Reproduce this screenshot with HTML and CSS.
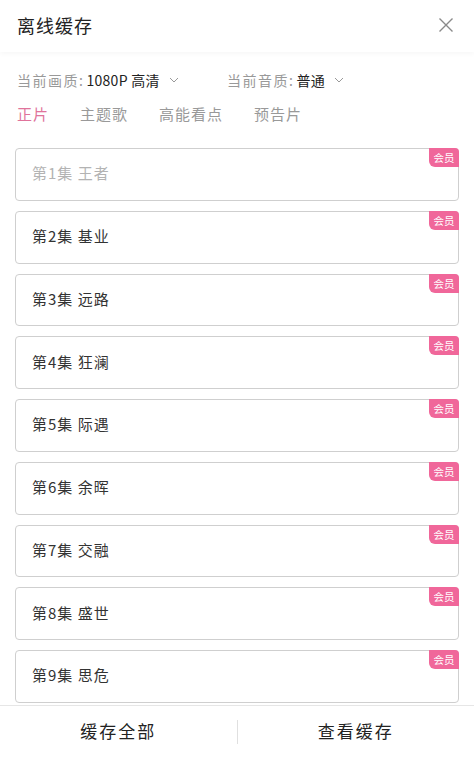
FILE: index.html
```html
<!DOCTYPE html>
<html lang="zh">
<head>
<meta charset="utf-8">
<title>离线缓存</title>
<link rel="stylesheet" href="styles.css">
</head>
<body>
<div class="page">
  <header class="header">
    <h1 class="title">离线缓存</h1>
    <button class="close" aria-label="关闭">
      <svg width="16" height="16" viewBox="0 0 16 16"><path d="M1.5 1.5L14.5 14.5M14.5 1.5L1.5 14.5" stroke="#8a8a8a" stroke-width="1.4" fill="none"/></svg>
    </button>
  </header>

  <div class="quality">
    <div class="q-item q-video">
      <span class="q-label">当前画质:</span><span class="q-value">1080P 高清</span>
      <svg class="chev" width="10" height="6" viewBox="0 0 10 6"><path d="M1 1L5 5L9 1" stroke="#999" stroke-width="1" fill="none"/></svg>
    </div>
    <div class="q-item">
      <span class="q-label">当前音质:</span><span class="q-value">普通</span>
      <svg class="chev" width="10" height="6" viewBox="0 0 10 6"><path d="M1 1L5 5L9 1" stroke="#999" stroke-width="1" fill="none"/></svg>
    </div>
  </div>

  <nav class="tabs">
    <span class="tab active">正片</span>
    <span class="tab">主题歌</span>
    <span class="tab">高能看点</span>
    <span class="tab">预告片</span>
  </nav>

  <div class="list">
    <div class="card disabled"><span class="ep">第1集 王者</span><span class="badge">会员</span></div>
    <div class="card"><span class="ep">第2集 基业</span><span class="badge">会员</span></div>
    <div class="card"><span class="ep">第3集 远路</span><span class="badge">会员</span></div>
    <div class="card"><span class="ep">第4集 狂澜</span><span class="badge">会员</span></div>
    <div class="card"><span class="ep">第5集 际遇</span><span class="badge">会员</span></div>
    <div class="card"><span class="ep">第6集 余晖</span><span class="badge">会员</span></div>
    <div class="card"><span class="ep">第7集 交融</span><span class="badge">会员</span></div>
    <div class="card"><span class="ep">第8集 盛世</span><span class="badge">会员</span></div>
    <div class="card"><span class="ep">第9集 思危</span><span class="badge">会员</span></div>
  </div>

  <footer class="footer">
    <button class="f-btn">缓存全部</button>
    <span class="f-div"></span>
    <button class="f-btn">查看缓存</button>
  </footer>
</div>
</body>
</html>
```

FILE: styles.css
```css
* { box-sizing: border-box; }
html, body { margin: 0; padding: 0; background: #fff; }
body {
  font-family: "Noto Sans CJK SC", "Noto Sans", sans-serif;
  color: #222;
}
.page {
  height: 100vh;
  display: flex;
  flex-direction: column;
  overflow: hidden;
}
.header {
  height: 52px;
  flex: none;
  display: flex;
  align-items: center;
  justify-content: space-between;
  padding: 0 20px 2px 17px;
  box-shadow: 0 2px 5px rgba(0,0,0,0.035);
  position: relative;
  z-index: 1;
}
.title {
  margin: 0;
  font-size: 18px;
  font-weight: 400;
  letter-spacing: 1px;
  line-height: 24px;
  color: #222;
}
.close {
  border: 0;
  background: none;
  padding: 0;
  width: 16px;
  height: 16px;
  display: flex;
}
.quality {
  flex: none;
  display: flex;
  align-items: center;
  margin-top: 18px;
  padding-left: 17px;
  height: 20px;
  font-size: 14px;
  line-height: 20px;
}
.q-item { display: flex; align-items: center; }
.q-video { width: 210px; }
.q-label { color: #999; letter-spacing: 1.5px; }
.q-value { color: #222; margin-left: 2px; letter-spacing: 0.3px; }
.chev { margin-left: 9px; }
.tabs {
  flex: none;
  display: flex;
  gap: 31px;
  margin-top: 14px;
  padding-left: 17px;
  font-size: 15px;
  line-height: 20px;
}
.tab { color: #999; letter-spacing: 1px; }
.tab.active { color: #e0739b; }
.list {
  flex: 1;
  min-height: 0;
  overflow: hidden;
  padding: 24px 15px 0 15px;
  display: flex;
  flex-direction: column;
  gap: 10px;
}
.card {
  flex: none;
  position: relative;
  height: 52.75px;
  border: 1px solid #cfcfcf;
  border-radius: 4px;
  display: flex;
  align-items: center;
  padding: 0 0 3px 16px;
}
.ep {
  font-size: 15px;
  color: #333;
  letter-spacing: 1px;
}
.card.disabled .ep { color: #b3b3b3; }
.badge {
  position: absolute;
  top: -1px;
  right: -1px;
  width: 30px;
  height: 19px;
  background: #f0679a;
  color: #fff;
  font-size: 10.5px;
  line-height: 19px;
  text-align: center;
  border-radius: 0 4px 0 6px;
}
.footer {
  flex: none;
  height: 53px;
  border-top: 1px solid #e6e6e6;
  display: flex;
  align-items: center;
}
.f-btn {
  flex: 1;
  border: 0;
  background: none;
  font-family: inherit;
  font-size: 17px;
  letter-spacing: 2px;
  color: #222;
  padding: 0 0 3px 0;
  height: 100%;
}
.f-div {
  width: 1px;
  height: 24px;
  background: #e0e0e0;
  flex: none;
}
```
